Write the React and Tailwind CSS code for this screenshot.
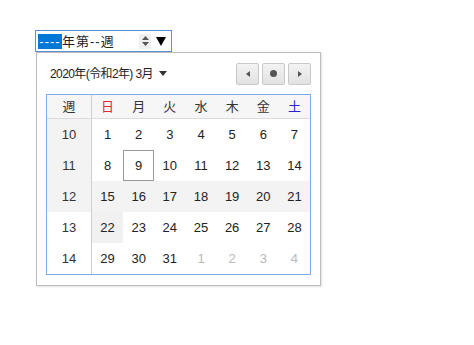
const weeks = [
  { no: 10, days: [1, 2, 3, 4, 5, 6, 7] },
  { no: 11, days: [8, 9, 10, 11, 12, 13, 14] },
  { no: 12, days: [15, 16, 17, 18, 19, 20, 21] },
  { no: 13, days: [22, 23, 24, 25, 26, 27, 28] },
  { no: 14, days: [29, 30, 31, 1, 2, 3, 4] },
];

const heads = ["日", "月", "火", "水", "木", "金", "土"];

function NavButton({ children }) {
  return (
    <button className="flex h-[22px] w-[23px] items-center justify-center rounded-[2px] border border-[#c8c8c8] bg-gradient-to-b from-[#f3f3f3] to-[#e2e2e2]">
      {children}
    </button>
  );
}

export default function App() {
  return (
    <div
      className="min-h-screen w-full bg-white pl-[35px] pt-[30px] text-[#222]"
      style={{ fontFamily: '"Liberation Sans", "Noto Sans CJK JP", sans-serif' }}
    >
      {/* Input */}
      <div className="flex h-[22px] w-[137px] items-center border border-[#5b8fd9] pl-[2px] text-[13px] leading-none">
        <span className="flex h-[15px] w-[24px] items-center justify-center bg-[#0078d7] text-white tracking-[1px]">
          ----
        </span>
        <span className="tracking-[1px]">年第--週</span>
        <div className="ml-auto flex h-[15px] w-[12px] flex-col items-center justify-center bg-[#f0f0f0]">
          <svg width="7" height="4" viewBox="0 0 7 4" className="mb-[2px]">
            <path d="M0 4 L3.5 0 L7 4 Z" fill="#555" />
          </svg>
          <svg width="7" height="4" viewBox="0 0 7 4">
            <path d="M0 0 L3.5 4 L7 0 Z" fill="#555" />
          </svg>
        </div>
        <svg width="10" height="9" viewBox="0 0 10 9" className="ml-[5px] mr-[5px]">
          <path d="M0 0 L10 0 L5 9 Z" fill="#000" />
        </svg>
      </div>

      {/* Popup */}
      <div className="ml-[1px] w-[285px] border border-[#bcbcbc] bg-white px-[9px] pb-[10px] pt-[9px] shadow-[1px_1px_2px_rgba(0,0,0,0.12)]">
        <div className="flex h-[23px] items-center">
          <div className="flex items-center pl-[4px] text-[12px] tracking-[-0.6px] text-[#222]">
            <span>2020年(令和2年) 3月</span>
            <svg width="8" height="5" viewBox="0 0 8 5" className="ml-[6px]">
              <path d="M0 0 L8 0 L4 5 Z" fill="#333" />
            </svg>
          </div>
          <div className="ml-auto flex gap-[3px]">
            <NavButton>
              <svg width="4" height="6" viewBox="0 0 4 6">
                <path d="M4 0 L0 3 L4 6 Z" fill="#555" />
              </svg>
            </NavButton>
            <NavButton>
              <div className="h-[7px] w-[7px] rounded-full bg-[#555]" />
            </NavButton>
            <NavButton>
              <svg width="4" height="6" viewBox="0 0 4 6">
                <path d="M0 0 L4 3 L0 6 Z" fill="#555" />
              </svg>
            </NavButton>
          </div>
        </div>

        <div className="mt-[9px] border border-[#7fabec] text-[13px]">
          <div className="grid h-[24px] grid-cols-[45px_repeat(7,1fr)] border-b border-[#dcdcdc] bg-[#f6f6f6]">
            <div className="flex items-center justify-center border-r border-[#cfcfcf] text-[#333]">週</div>
            {heads.map((h, i) => (
              <div
                key={h}
                className={`flex items-center justify-center ${
                  i === 0 ? "text-[#e0282e]" : i === 6 ? "text-[#2424c8]" : "text-[#333]"
                }`}
              >
                {h}
              </div>
            ))}
          </div>
          {weeks.map((w, wi) => (
            <div
              key={w.no}
              className={`grid h-[31px] grid-cols-[45px_repeat(7,1fr)] ${wi === 2 ? "bg-[#f3f3f3]" : ""}`}
            >
              <div
                className={`flex items-center justify-center border-r border-[#cfcfcf] text-[#333] ${
                  wi < 3 ? "bg-[#f3f3f3]" : ""
                }`}
              >
                {w.no}
              </div>
              {w.days.map((d, di) => {
                const other = wi === 4 && di > 2;
                const today = wi === 1 && di === 1;
                const hover = wi === 3 && di === 0;
                return (
                  <div
                    key={di}
                    className={`flex items-center justify-center ${
                      other ? "text-[#b8b8b8]" : "text-[#222]"
                    } ${today ? "border border-[#9a9a9a]" : ""} ${hover ? "bg-[#f1f1f1]" : ""}`}
                  >
                    {d}
                  </div>
                );
              })}
            </div>
          ))}
        </div>
      </div>
    </div>
  );
}
